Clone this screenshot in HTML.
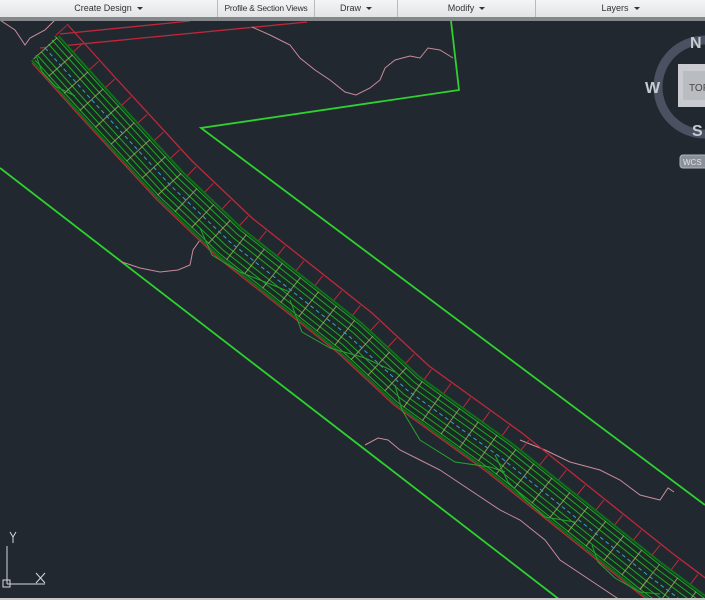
<!DOCTYPE html>
<html><head><meta charset="utf-8"><style>
html,body{margin:0;padding:0;width:705px;height:600px;overflow:hidden;background:#212830;font-family:"Liberation Sans",sans-serif}
.bar{position:absolute;left:0;top:0;width:705px;height:17px;background:linear-gradient(#f4f5f6,#e2e4e6);border-bottom:4px solid #85888b;overflow:hidden}
.bar div{position:absolute;top:0;height:17px;line-height:16px;font-size:9px;color:#333;text-align:center;border-right:1px solid #b8bbbe;white-space:nowrap;overflow:hidden}
.tri{display:inline-block;border-left:3px solid transparent;border-right:3px solid transparent;border-top:3px solid #333;margin-left:5px;vertical-align:1px}
svg{position:absolute;left:0;top:0;overflow:hidden}
</style></head><body>
<svg width="705" height="600" viewBox="0 0 705 600">
<defs>
<polyline id="c" points="45,48 90,98 170,185 230,242 350,337 407,390 500,457 650,577 710,622" fill="none"/>
</defs>
<polyline points="451,21 459,90 201,128 705,505" fill="none" stroke="#2ed12e" stroke-width="1.8"/>
<line x1="0" y1="168" x2="560" y2="600" stroke="#2ed12e" stroke-width="1.8"/>
<line x1="40" y1="48" x2="307" y2="22" stroke="#c0283a" stroke-width="1.3"/>
<line x1="60" y1="34" x2="190" y2="21" stroke="#c0283a" stroke-width="1.3"/>
<g fill="none" stroke="#c98b9a" stroke-width="1">
<polyline points="252,27 270,35 290,45 300,58 315,70 330,80 345,92 356,95 370,88 380,80 385,68 395,60 410,56 420,58 428,48 440,50 453,58"/>
<polyline points="122,262 140,268 160,272 178,270 190,265 193,250 200,240"/>
<polyline points="365,445 378,438 388,440 400,450 420,460 440,470 470,490 500,510 520,520 545,540 560,560 590,580 620,600"/>
<polyline points="520,440 545,450 570,462 600,470 620,480 640,495 660,500 668,488 674,492"/>
<polyline points="0,20 15,30 25,45 30,38 45,30 55,20"/>
<polyline points="200,240 215,245 240,250 265,262"/>
</g>
<use href="#c" transform="translate(22,-24)" stroke="#c0283a" stroke-width="1.3"/>
<use href="#c" transform="translate(-13,15)" stroke="#c0283a" stroke-width="1.2"/>
<use href="#c" transform="translate(16,-18)" stroke="#c0283a" stroke-width="14" stroke-dasharray="1 23"/>
<use href="#c" stroke="#0f6e1a" stroke-width="38"/>
<use href="#c" stroke="#1c2a26" stroke-width="34"/>
<g stroke="#1fa82a" stroke-width="1">
<use href="#c" transform="translate(-10,12)"/>
<use href="#c" transform="translate(-7,8)"/>
<use href="#c" transform="translate(-3.5,4)"/>
<use href="#c" transform="translate(3.5,-4)"/>
<use href="#c" transform="translate(7,-8)"/>
<use href="#c" transform="translate(10,-12)"/>
</g>
<use href="#c" stroke="#b8c070" stroke-width="32" stroke-dasharray="1 22" opacity="0.7"/>
<use href="#c" stroke="#3aa0d0" stroke-width="1" stroke-dasharray="4 3"/>
<g fill="none" stroke="#2aa030" stroke-width="1">
<polyline points="200,228 212,255 240,272 265,282 290,292"/>
<polyline points="290,300 302,332 330,348 365,358 395,372"/>
<polyline points="395,385 402,410 420,440 455,462 490,467 505,472"/>
<polyline points="495,455 508,482 528,502 545,517 575,522"/>
<polyline points="592,545 598,562 615,578 640,592 660,594"/>
<polyline points="36,55 42,72 55,86 75,96"/>
</g>
<g stroke="#d8d8d8" stroke-width="1" fill="none">
<line x1="7" y1="546" x2="7" y2="584"/><line x1="7" y1="584" x2="45" y2="584"/>
<rect x="3" y="580" width="7" height="7"/>
<path d="M36,573 L45,583 M45,573 L36,583 M10,532 L13,537 M16,532 L13,537 L13,543"/>
</g>
<circle cx="705" cy="87" r="47" fill="none" stroke="#4b5160" stroke-width="9"/>
<rect x="678" y="64" width="30" height="43" fill="#c9cbd0"/>
<rect x="683" y="71" width="25" height="29" fill="#b9bcc1"/>
<text x="689" y="91" font-size="10" fill="#444">TOP</text>
<g font-weight="bold" font-size="16" fill="#c8ccd2">
<text x="690" y="48">N</text><text x="645" y="93">W</text><text x="692" y="136">S</text>
</g>
<rect x="680" y="155" width="30" height="13" rx="3" fill="#8a8f9a" stroke="#b0b4bc"/>
<text x="683" y="165" font-size="8" fill="#e0e2e6">WCS</text>
<rect x="0" y="598" width="705" height="2" fill="#c8c8c8"/>
</svg>
<div class="bar">
<div style="left:0;width:217px">Create Design<span class="tri"></span></div>
<div style="left:218px;width:96px;font-size:8.5px;letter-spacing:-0.2px">Profile &amp; Section Views</div>
<div style="left:315px;width:82px">Draw<span class="tri"></span></div>
<div style="left:398px;width:137px">Modify<span class="tri"></span></div>
<div style="left:536px;width:169px;border-right:0">Layers<span class="tri"></span></div>
</div>
</body></html>
